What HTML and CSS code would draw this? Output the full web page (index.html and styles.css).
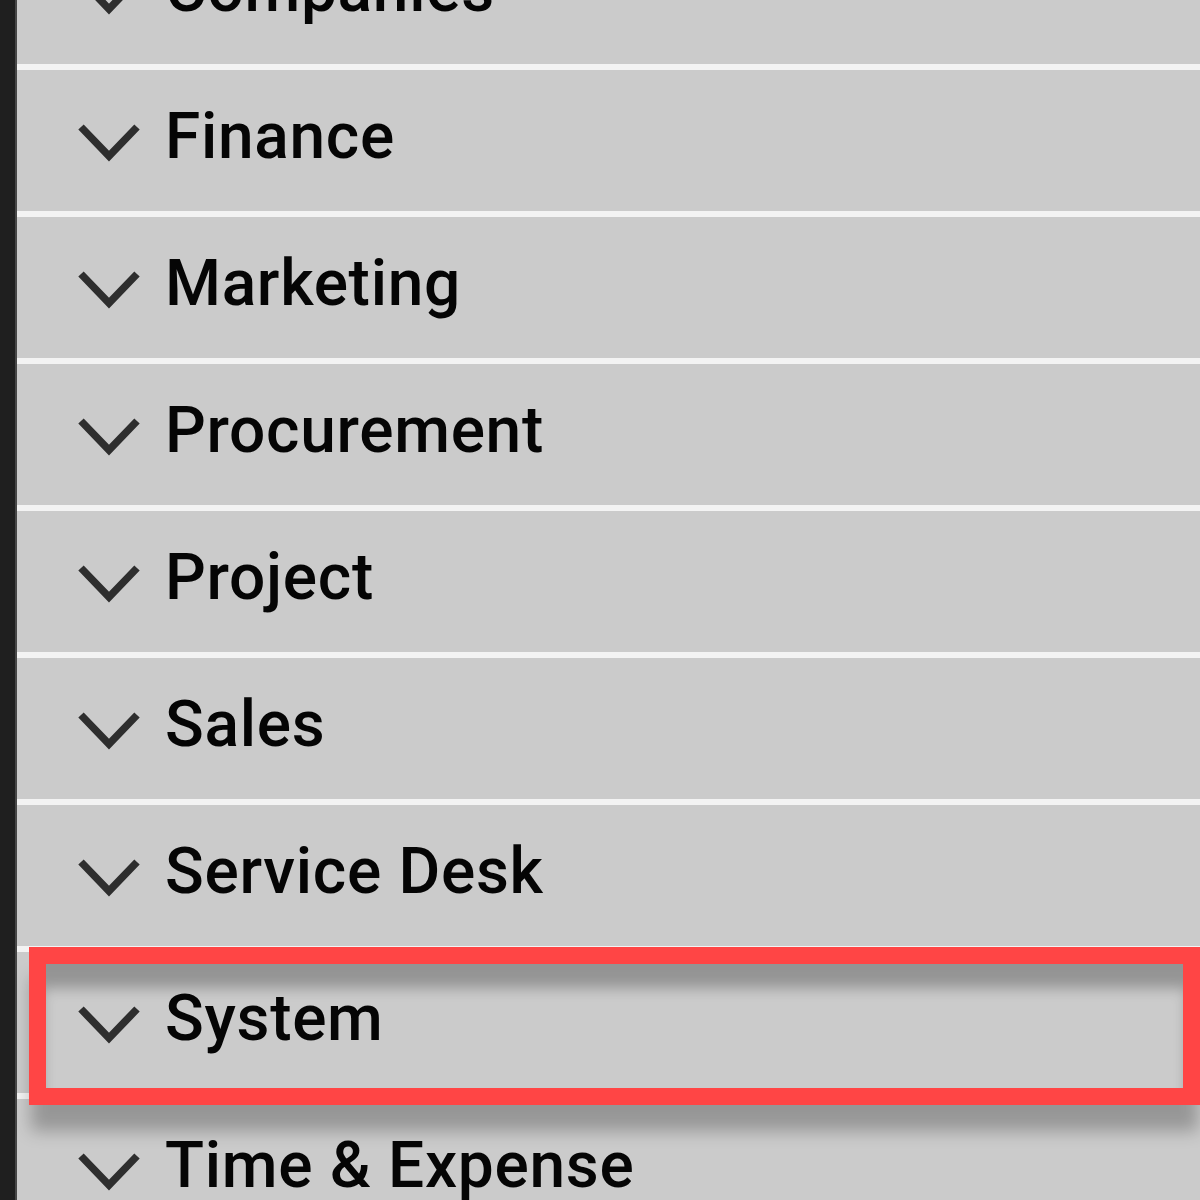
FILE: index.html
```html
<!DOCTYPE html>
<html lang="en">
<head>
<meta charset="utf-8">
<title>Menu</title>
<link rel="stylesheet" href="styles.css">
</head>
<body>
<div class="page">
  <div class="rail"></div>
  <ul class="menu">
    <li class="item"><svg class="chev" viewBox="0 0 66 44"><path d="M5 5 L33 34 L61 5"/></svg><span class="label">Companies</span></li>
    <li class="item"><svg class="chev" viewBox="0 0 66 44"><path d="M5 5 L33 34 L61 5"/></svg><span class="label">Finance</span></li>
    <li class="item"><svg class="chev" viewBox="0 0 66 44"><path d="M5 5 L33 34 L61 5"/></svg><span class="label">Marketing</span></li>
    <li class="item"><svg class="chev" viewBox="0 0 66 44"><path d="M5 5 L33 34 L61 5"/></svg><span class="label">Procurement</span></li>
    <li class="item"><svg class="chev" viewBox="0 0 66 44"><path d="M5 5 L33 34 L61 5"/></svg><span class="label">Project</span></li>
    <li class="item"><svg class="chev" viewBox="0 0 66 44"><path d="M5 5 L33 34 L61 5"/></svg><span class="label">Sales</span></li>
    <li class="item"><svg class="chev" viewBox="0 0 66 44"><path d="M5 5 L33 34 L61 5"/></svg><span class="label">Service Desk</span></li>
    <li class="item item-active"><svg class="chev" viewBox="0 0 66 44"><path d="M5 5 L33 34 L61 5"/></svg><span class="label">System</span><div class="highlight"></div></li>
    <li class="item"><svg class="chev" viewBox="0 0 66 44"><path d="M5 5 L33 34 L61 5"/></svg><span class="label">Time &amp; Expense</span></li>
  </ul>
</div>
</body>
</html>
```
FILE: styles.css
```css
html, body {
  margin: 0;
  padding: 0;
  height: 100%;
  overflow: hidden;
  background: #cbcbcb;
}

.page {
  display: flex;
  height: 1200px;
  overflow: hidden;
}

.rail {
  flex: 0 0 15px;
  background: #1f1f1f;
  border-right: 2px solid #474747;
}

.menu {
  flex: 1;
  list-style: none;
  margin: -77px 0 0 0;
  padding: 0;
}

.item {
  position: relative;
  display: flex;
  align-items: flex-start;
  height: 141px;
  border-bottom: 6px solid #f3f3f3;
  font-family: Roboto, "Liberation Sans", sans-serif;
  font-weight: 500;
  font-size: 64px;
  line-height: 64px;
  color: #050505;
}

.chev {
  flex: 0 0 66px;
  width: 66px;
  height: 44px;
  margin: 52px 0 0 59px;
}

.chev path {
  fill: none;
  stroke: #2e2e2e;
  stroke-width: 7.5;
}

.label {
  margin: 35px 0 0 23px;
  white-space: nowrap;
  letter-spacing: 0.7px;
}

.highlight {
  position: absolute;
  left: 12px;
  top: -5px;
  right: 0;
  height: 158px;
  box-sizing: border-box;
  border: 17px solid #ff4545;
  box-shadow: inset 0 28px 14px -4px rgba(0, 0, 0, 0.27),
              0 28px 16px -2px rgba(0, 0, 0, 0.26);
  pointer-events: none;
}
```
